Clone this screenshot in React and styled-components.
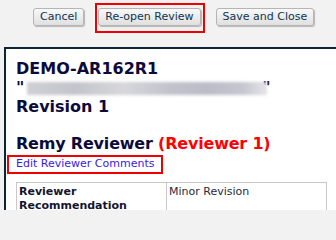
import React from "react";
import styled, { createGlobalStyle } from "styled-components";

const Global = createGlobalStyle`
  html, body { margin: 0; padding: 0; }
  body {
    background: #f2f2f2;
    font-family: "DejaVu Sans", Verdana, sans-serif;
    overflow: hidden;
    width: 336px;
    height: 210px;
  }
`;

const Toolbar = styled.div`
  display: flex;
  align-items: flex-start;
  gap: 11px;
  padding: 3px 0 0 33px;
  height: 30px;
  margin-bottom: 14px;
`;

const Button = styled.button`
  margin-top: ${(p) => (p.$boxed ? 0 : 5)}px;
  height: 18px;
  padding: 0 6px;
  font-family: "DejaVu Sans", Verdana, sans-serif;
  font-size: 11px;
  line-height: 16px;
  color: #0d3553;
  background: linear-gradient(#f8f8f8, #e0e0e0);
  border: 1px solid #b5b5b5;
  border-radius: 3px;
  box-shadow: 1px 1px 1px rgba(0, 0, 0, 0.25);
  cursor: pointer;
`;

const Highlight = styled.div`
  border: 2px solid #ee0000;
  padding: 3px 2px 5px 1px;
  display: flex;
`;

const Panel = styled.div`
  margin-left: 4px;
  margin-right: -20px;
  border-top: 2px solid #0d2636;
  border-left: 2px solid #0d2636;
  background: #ffffff;
  padding: 10px 0 40px 10px;
`;

const Title = styled.div`
  font-size: 16px;
  font-weight: bold;
  line-height: 19px;
  color: #0b0b3b;
`;

const Blurred = styled.span`
  display: inline-block;
  vertical-align: -2px;
  width: 240px;
  height: 13px;
  margin: 0 -5px 0 3px;
  background: linear-gradient(
    90deg,
    #cfcfd6 0%,
    #c4c4cc 20%,
    #d6d6dc 40%,
    #c2c2cc 60%,
    #bcbcc8 75%,
    #c6c6d0 90%,
    #e4e4e8 100%
  );
  filter: blur(1.5px);
`;

const ReviewerHeading = styled.div`
  margin-top: 20px;
  font-size: 16px;
  font-weight: bold;
  line-height: 16px;
  letter-spacing: -0.2px;
  color: #0b0b3b;
`;

const Role = styled.span`
  color: #ff0000;
`;

const LinkBox = styled.div`
  display: inline-block;
  margin-left: -9px;
  border: 2px solid #ee0000;
  padding: 0 7px 2px 7px;
`;

const EditLink = styled.a`
  font-size: 11px;
  line-height: 13px;
  color: #3b1ae4;
  text-decoration: none;
  display: block;
`;

const Table = styled.table`
  margin-top: 8px;
  width: 311px;
  border-collapse: collapse;
  border: 1px solid #c8c8c8;
`;

const Cell = styled.td`
  border: 1px solid #c8c8c8;
  padding: 2px 2px 3px;
  vertical-align: top;
  font-size: 11px;
  line-height: 14px;
  width: ${(p) => p.$w || "auto"};
  font-weight: ${(p) => (p.$bold ? "bold" : "normal")};
  color: ${(p) => (p.$bold ? "#14142e" : "#2a2a3a")};
`;

export default function App() {
  return (
    <>
      <Global />
      <Toolbar>
        <Button>Cancel</Button>
        <Highlight>
          <Button $boxed>Re-open Review</Button>
        </Highlight>
        <Button>Save and Close</Button>
      </Toolbar>
      <Panel>
        <Title>
          DEMO-AR162R1
          <br />
          "<Blurred />"
          <br />
          Revision 1
        </Title>
        <ReviewerHeading>
          Remy Reviewer <Role>(Reviewer 1)</Role>
        </ReviewerHeading>
        <LinkBox>
          <EditLink href="#">Edit Reviewer Comments</EditLink>
        </LinkBox>
        <Table>
          <tbody>
            <tr>
              <Cell $bold $w="145px">
                Reviewer
                <br />
                Recommendation
              </Cell>
              <Cell>Minor Revision</Cell>
            </tr>
          </tbody>
        </Table>
      </Panel>
    </>
  );
}
